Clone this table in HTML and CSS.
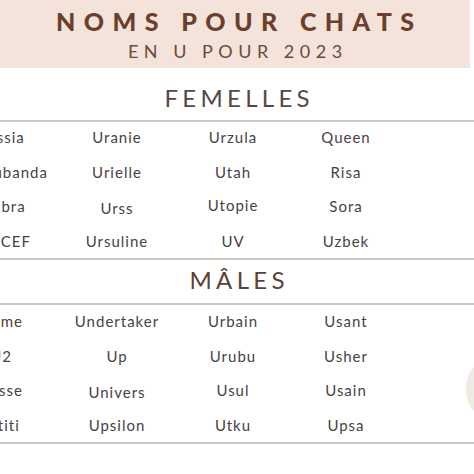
FILE: index.html
```html
<!DOCTYPE html>
<html lang="fr">
<head>
<meta charset="utf-8">
<title>Noms pour chats en U</title>
<link rel="stylesheet" href="styles.css">
</head>
<body>
<div class="page">
  <header class="banner">
    <h1 class="title">NOMS POUR CHATS</h1>
    <p class="subtitle">EN U POUR 2023</p>
  </header>

  <section class="section females">
    <h2 class="heading">FEMELLES</h2>
    <div class="rule"></div>
    <div class="grid">
      <span>Russia</span><span>Uranie</span><span>Urzula</span><span>Queen</span>
      <span>Ouzoubanda</span><span>Urielle</span><span>Utah</span><span>Risa</span>
      <span>Umbra</span><span class="low">Urss</span><span class="high">Utopie</span><span>Sora</span>
      <span>UNICEF</span><span>Ursuline</span><span>UV</span><span>Uzbek</span>
    </div>
    <div class="rule"></div>
  </section>

  <section class="section males">
    <h2 class="heading">MÂLES</h2>
    <div class="rule"></div>
    <div class="grid">
      <span>Hume</span><span>Undertaker</span><span>Urbain</span><span>Usant</span>
      <span>U2</span><span>Up</span><span>Urubu</span><span>Usher</span>
      <span>Bosse</span><span class="low">Univers</span><span>Usul</span><span>Usain</span>
      <span>Kititi</span><span>Upsilon</span><span>Utku</span><span>Upsa</span>
    </div>
    <div class="rule"></div>
  </section>
  <div class="blob"></div>
</div>
</body>
</html>
```

FILE: styles.css
```css
* { box-sizing: border-box; }
html, body { margin: 0; padding: 0; background: #ffffff; }
body { width: 474px; height: 474px; overflow: hidden; font-family: Lato, "Open Sans", sans-serif; }
.page { position: relative; width: 474px; height: 474px; overflow: hidden; }

.banner {
  width: 470px;
  height: 68px;
  background: #f4e3da;
  text-align: center;
  padding-top: 7px;
}
.title {
  margin: 0;
  font-size: 25px;
  line-height: 28px;
  font-weight: 900;
  letter-spacing: 8.4px;
  padding-left: 8.4px;
  color: #6a3f2b;
}
.subtitle {
  margin: 5px 0 0;
  font-size: 18px;
  line-height: 22px;
  font-weight: 400;
  letter-spacing: 5.5px;
  padding-left: 5.5px;
  color: #6b4a3b;
}

.females { padding-top: 14.5px; }
.males { padding-top: 5px; }
.heading {
  margin: 0;
  text-align: center;
  font-size: 24px;
  line-height: 30px;
  font-weight: 400;
  letter-spacing: 4.3px;
  padding-left: 4.3px;
  color: #574842;
}
.males .heading { color: #5b4136; }
.rule {
  height: 2px;
  background: #cfc6bf;
}
.females .heading + .rule { margin-top: 7.5px; }
.males .heading + .rule { margin-top: 8px; }
.grid {
  display: grid;
  grid-template-columns: 116px 116px 116px 110px;
  grid-template-rows: repeat(4, 34.5px);
  margin-left: -57px;
  font-size: 15px;
  letter-spacing: 1px;
  color: #474244;
  align-items: center;
}
.females .grid { margin-top: -2px; }
.males .grid { margin-top: -1px; }
.grid span { text-align: center; white-space: nowrap; }
.grid .low { position: relative; top: 2px; }
.grid .high { position: relative; top: -1px; }

.blob {
  position: absolute;
  left: 466px;
  top: 365px;
  width: 28px;
  height: 48px;
  border-radius: 50%;
  background: #eeebe5;
}
```
